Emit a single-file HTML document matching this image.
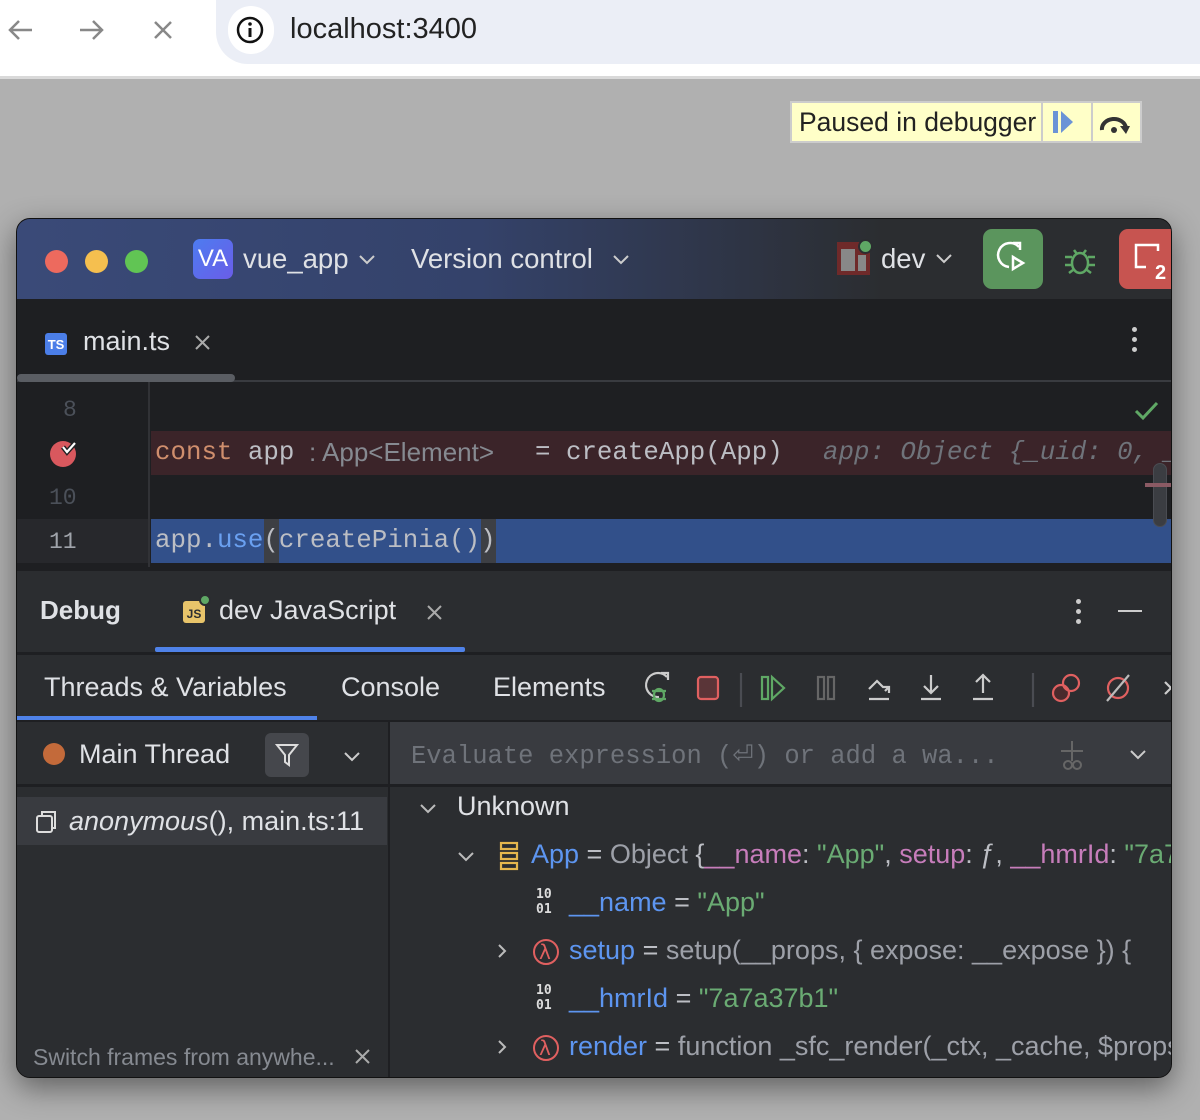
<!DOCTYPE html>
<html><head><meta charset="utf-8"><style>
*{margin:0;padding:0;box-sizing:border-box}
body{width:1200px;height:1120px;background:#b0b0b0;font-family:"Liberation Sans",sans-serif;position:relative;overflow:hidden}
.a{position:absolute}
.mono{font-family:"Liberation Mono",monospace}
.t{color:#dfe1e5;font-size:27px;white-space:nowrap}
</style></head><body>
<div class="a" style="left:0;top:0;width:1200px;height:76px;background:#fff"></div>
<div class="a" style="left:0;top:76px;width:1200px;height:3px;background:#d9d9d9"></div>
<div class="a" style="left:216px;top:0;width:1000px;height:64px;background:#ebeef6;border-radius:0 0 0 32px"></div>
<div class="a" style="left:228px;top:6px;width:46px;height:48px;background:#fff;border-radius:24px"></div>
<svg class="a" style="left:0;top:10px" width="200" height="40"><g stroke="#888" stroke-width="2.5" fill="none"><path d="M32 20H10M19 11l-9 9 9 9"/><path d="M80 20h22M93 11l9 9-9 9"/><path d="M155 12l16 16M171 12l-16 16"/></g></svg>
<svg class="a" style="left:236px;top:16px" width="28" height="28"><circle cx="14" cy="14" r="12" fill="none" stroke="#111" stroke-width="2.5"/><rect x="12.5" y="12" width="3" height="9" fill="#111"/><circle cx="14" cy="8" r="1.8" fill="#111"/></svg>
<div class="a" style="left:290px;top:13px;font-size:29px;color:#222">localhost:3400</div>
<div class="a" style="left:790px;top:101px;width:352px;height:42px;background:#ffffc8;border:2px solid #ccc"></div>
<div class="a" style="left:1041px;top:101px;width:2px;height:42px;background:#ccc"></div>
<div class="a" style="left:1091px;top:101px;width:2px;height:42px;background:#ccc"></div>
<div class="a" style="left:799px;top:107px;font-size:26.5px;color:#222">Paused in debugger</div>
<svg class="a" style="left:1050px;top:108px" width="90" height="30"><rect x="3" y="3" width="5" height="22" fill="#6b93d6"/><path d="M11 3l12 11-12 11z" fill="#6b93d6"/><path d="M52 22a12 10 0 0 1 24-2" fill="none" stroke="#333" stroke-width="4"/><path d="M70 18h10l-4 8z" fill="#333"/><circle cx="64" cy="22" r="3" fill="#333"/></svg>

<div class="a" style="left:16px;top:218px;width:1156px;height:860px;border-radius:14px;background:#2b2d30;border:1px solid #111;overflow:hidden;box-shadow:0 10px 30px rgba(0,0,0,.45)">
<div class="a" style="left:0;top:0;width:1156px;height:80px;background:linear-gradient(90deg,#3a4a78,#34426a 40%,#2b2d30 75%)"></div>
<div class="a" style="left:28px;top:31px;width:23px;height:23px;border-radius:50%;background:#ed6a5e"></div>
<div class="a" style="left:68px;top:31px;width:23px;height:23px;border-radius:50%;background:#f5bf4f"></div>
<div class="a" style="left:108px;top:31px;width:23px;height:23px;border-radius:50%;background:#61c554"></div>
<div class="a" style="left:176px;top:20px;width:40px;height:40px;border-radius:7px;background:linear-gradient(135deg,#4d7cf0,#6a5de8);color:#fff;font-size:24px;text-align:center;line-height:40px">VA</div>
<div class="a t" style="left:226px;top:24px;font-size:27.5px">vue_app</div>
<div class="a t" style="left:394px;top:24px;font-size:27.5px">Version control</div>
<svg class="a" style="left:340px;top:30px" width="280" height="20"><g stroke="#ccc" stroke-width="2" fill="none"><path d="M3 7l7 7 7-7"/><path d="M257 7l7 7 7-7"/></g></svg>
<div class="a" style="left:820px;top:23px;width:33px;height:33px;background:#6f2a2a"></div>
<div class="a" style="left:824px;top:30px;width:14px;height:22px;background:#888"></div>
<div class="a" style="left:841px;top:36px;width:8px;height:16px;background:#888"></div>
<div class="a" style="left:841px;top:20px;width:15px;height:15px;border-radius:50%;background:#5fa865;border:2px solid #2b2d30"></div>
<div class="a t" style="left:864px;top:24px;font-size:27.5px">dev</div>
<svg class="a" style="left:918px;top:32px" width="20" height="16"><path d="M2 4l7 7 7-7" stroke="#ccc" stroke-width="2" fill="none"/></svg>
<div class="a" style="left:966px;top:10px;width:60px;height:60px;border-radius:9px;background:#5b955d"></div>
<svg class="a" style="left:976px;top:20px" width="40" height="40"><g stroke="#fff" stroke-width="2.5" fill="none"><path d="M26 8a12 12 0 1 0-10 20"/><path d="M20 4h7v7"/><path d="M20 18l10 6-10 6z"/></g></svg>
<svg class="a" style="left:1044px;top:22px" width="38" height="38"><g stroke="#5fa865" stroke-width="2.5" fill="none"><ellipse cx="19" cy="22" rx="8" ry="10"/><path d="M13 9l3 4M25 9l-3 4M4 16h7M27 16h7M4 24h7M27 24h7M8 32l4-3M30 32l-4-3"/></g></svg>
<div class="a" style="left:1102px;top:10px;width:60px;height:60px;border-radius:9px;background:#c75450"></div>
<svg class="a" style="left:1112px;top:20px" width="44" height="44"><path d="M24 6H7v22h10" stroke="#fff" stroke-width="2.5" fill="none"/><path d="M24 6h5v6" stroke="#fff" stroke-width="2.5" fill="none"/><text x="26" y="40" fill="#fff" font-size="20" font-family="Liberation Sans" font-weight="bold">2</text></svg>

<div class="a" style="left:0;top:80px;width:1156px;height:272px;background:#1e1f22"></div>
<div class="a" style="left:28px;top:114px;width:22px;height:22px;background:#4b7ee8;border-radius:3px;color:#fff;font-size:13px;text-align:center;line-height:24px;font-weight:bold">TS</div>
<div class="a t" style="left:66px;top:107px;font-size:27px">main.ts</div>
<svg class="a" style="left:176px;top:114px" width="20" height="20"><path d="M3 3l13 13M16 3L3 16" stroke="#aaa" stroke-width="2"/></svg>
<div class="a" style="left:1115px;top:108px;width:5px;height:5px;border-radius:50%;background:#ccc;box-shadow:0 10px 0 #ccc,0 20px 0 #ccc"></div>
<div class="a" style="left:0;top:161px;width:1156px;height:2px;background:#393b40"></div>
<div class="a" style="left:0;top:155px;width:218px;height:8px;background:#5a5d63;border-radius:4px"></div>
<div class="a" style="left:131px;top:163px;width:2px;height:185px;background:#313236"></div>
<div class="a" style="left:134px;top:212px;width:1022px;height:44px;background:#3b2429"></div>
<div class="a" style="left:0;top:300px;width:131px;height:44px;background:#27282c"></div>
<div class="a" style="left:134px;top:300px;width:1022px;height:44px;background:#32508a"></div>
<div class="a" style="left:247px;top:300px;width:15px;height:44px;background:#3d3f44"></div>
<div class="a" style="left:464px;top:300px;width:15px;height:44px;background:#3d3f44"></div>
<div class="a mono" style="left:46px;top:178px;font-size:23px;color:#4b5059">8</div>
<div class="a mono" style="left:32px;top:266px;font-size:23px;color:#4b5059">10</div>
<div class="a mono" style="left:32px;top:310px;font-size:23px;color:#a0a4ab">11</div>
<svg class="a" style="left:28px;top:214px" width="36" height="36"><circle cx="18" cy="21" r="13" fill="#d9585e"/><path d="M18 14l4 5 8-9" stroke="#1e1f22" stroke-width="5" fill="none"/><path d="M18 14l4 5 8-9" stroke="#fff" stroke-width="2.2" fill="none"/></svg>
<div class="a mono" style="left:138px;top:219px;font-size:25.8px;color:#cf8e6d;white-space:pre">const <span style="color:#bcbec4">app</span></div>
<div class="a" style="left:292px;top:218px;font-size:26px;color:#868a91;white-space:pre">: App&lt;Element&gt;</div>
<div class="a mono" style="left:518px;top:219px;font-size:25.8px;color:#bcbec4;white-space:pre">= createApp(App)</div>
<div class="a mono" style="left:806px;top:219px;font-size:25.8px;color:#6f737a;font-style:italic;white-space:pre">app: Object {_uid: 0, _</div>
<div class="a mono" style="left:138px;top:307px;font-size:25.8px;color:#bcbec4;white-space:pre">app.<span style="color:#6aa0f0">use</span>(createPinia())</div>
<svg class="a" style="left:1116px;top:180px" width="28" height="24"><path d="M3 12l7 7 14-15" stroke="#5fa865" stroke-width="3" fill="none"/></svg>
<div class="a" style="left:1136px;top:244px;width:14px;height:64px;background:#3b3d42;border-radius:7px;border:1px solid #4a4c52"></div>
<div class="a" style="left:1128px;top:264px;width:28px;height:4px;background:#8b5a64"></div>

<div class="a" style="left:0;top:352px;width:1156px;height:508px;background:#2b2d30"></div>
<div class="a t" style="left:23px;top:376px;font-weight:bold;font-size:26px">Debug</div>
<div class="a" style="left:166px;top:382px;width:22px;height:22px;background:#e8c46a;border-radius:3px;color:#2b2d30;font-size:12px;font-weight:bold;text-align:center;line-height:26px">JS</div>
<div class="a" style="left:182px;top:375px;width:12px;height:12px;border-radius:50%;background:#5fa865;border:2px solid #2b2d30"></div>
<div class="a t" style="left:202px;top:376px;font-size:27px">dev JavaScript</div>
<svg class="a" style="left:408px;top:384px" width="20" height="20"><path d="M3 3l13 13M16 3L3 16" stroke="#aaa" stroke-width="2"/></svg>
<div class="a" style="left:138px;top:428px;width:310px;height:5px;background:#4f82e8;border-radius:2px"></div>
<div class="a" style="left:1059px;top:380px;width:5px;height:5px;border-radius:50%;background:#ccc;box-shadow:0 10px 0 #ccc,0 20px 0 #ccc"></div>
<div class="a" style="left:1101px;top:391px;width:24px;height:2px;background:#ccc"></div>
<div class="a" style="left:0;top:433px;width:1156px;height:3px;background:#1e1f22"></div>
<div class="a t" style="left:27px;top:453px">Threads &amp; Variables</div>
<div class="a t" style="left:324px;top:453px">Console</div>
<div class="a t" style="left:476px;top:453px">Elements</div>
<div class="a" style="left:0;top:497px;width:300px;height:4px;background:#4f82e8"></div>
<svg class="a" style="left:620px;top:448px" width="536" height="44"><g fill="none" stroke-width="2.2">
<path d="M30 10a12 12 0 1 0-8 20" stroke="#ccc"/><path d="M24 6h7v7" stroke="#ccc"/><ellipse cx="22" cy="28" rx="5" ry="6" stroke="#5fa865"/><path d="M15 24h14M15 32h14" stroke="#5fa865"/>
<rect x="61" y="10" width="20" height="22" rx="3" fill="#5a3538" stroke="#e06060"/>
<path d="M104 6v34" stroke="#4a4c52"/>
<rect x="125" y="10" width="6" height="22" stroke="#5fa865"/><path d="M135 10l12 11-12 11z" stroke="#5fa865"/>
<rect x="181" y="10" width="6" height="22" stroke="#666"/><rect x="191" y="10" width="6" height="22" stroke="#666"/>
<path d="M232 32h20M232 22l8-8 6 6h6v6M252 20l-4 4" stroke="#ccc"/>
<path d="M284 32h20M294 8v18M287 19l7 7 7-7" stroke="#ccc"/>
<path d="M336 32h20M346 26V8M339 15l7-7 7 7" stroke="#ccc"/>
<path d="M396 6v34" stroke="#4a4c52"/>
<circle cx="424" cy="26" r="8" fill="#4a2a2c" stroke="#e06060"/><circle cx="434" cy="16" r="8" stroke="#e06060"/>
<circle cx="481" cy="21" r="10" stroke="#e06060"/><path d="M470 34l22-26" stroke="#bbb"/>
<path d="M528 15l6 6-6 6" stroke="#ccc"/></g></svg>
<div class="a" style="left:0;top:501px;width:1156px;height:2px;background:#1e1f22"></div>
<div class="a" style="left:371px;top:503px;width:2px;height:357px;background:#1e1f22"></div>
<div class="a" style="left:373px;top:503px;width:783px;height:64px;background:#393b40"></div>
<div class="a" style="left:26px;top:524px;width:22px;height:22px;border-radius:50%;background:#c36a3a"></div>
<div class="a t" style="left:62px;top:520px">Main Thread</div>
<div class="a" style="left:248px;top:514px;width:44px;height:44px;border-radius:6px;background:#45474c"></div>
<svg class="a" style="left:256px;top:522px" width="28" height="28"><path d="M4 4h20l-8 10v10l-4-3v-7z" stroke="#ddd" stroke-width="2" fill="none"/></svg>
<svg class="a" style="left:326px;top:530px" width="20" height="16"><path d="M2 4l7 7 7-7" stroke="#ccc" stroke-width="2" fill="none"/></svg>
<div class="a" style="left:0;top:565px;width:1156px;height:3px;background:#1e1f22"></div>
<div class="a mono" style="left:394px;top:521px;font-size:25.5px;color:#6f737a;white-space:pre">Evaluate expression (⏎) or add a wa...</div>
<svg class="a" style="left:1040px;top:518px" width="120" height="40"><g stroke="#666" stroke-width="2" fill="none"><path d="M15 4v20M4 14h22"/><circle cx="11" cy="28" r="4"/><circle cx="20" cy="28" r="4"/></g><path d="M74 14l7 7 7-7" stroke="#ccc" stroke-width="2" fill="none"/></svg>
<div class="a" style="left:0;top:578px;width:370px;height:48px;background:#393b40"></div>
<svg class="a" style="left:18px;top:590px" width="24" height="26"><rect x="2" y="7" width="15" height="16" rx="2" stroke="#ddd" stroke-width="2" fill="none"/><path d="M7 7V3h13v16h-3" stroke="#ddd" stroke-width="2" fill="none"/></svg>
<div class="a t" style="left:52px;top:587px"><i>anonymous</i>(), main.ts:11</div>
<div class="a" style="left:16px;top:825px;font-size:23px;color:#868a91;white-space:nowrap">Switch frames from anywhe...</div>
<svg class="a" style="left:336px;top:828px" width="20" height="20"><path d="M3 3l13 13M16 3L3 16" stroke="#aaa" stroke-width="2"/></svg>
<svg class="a" style="left:400px;top:578px" width="160" height="300"><g stroke="#bbb" stroke-width="2" fill="none"><path d="M4 8l7 7 7-7"/><path d="M42 56l7 7 7-7"/><path d="M82 148l6 6-6 6"/><path d="M82 244l6 6-6 6"/></g>
<g stroke="#e5b74d" stroke-width="2.2" fill="none"><rect x="84" y="46" width="16" height="6"/><rect x="84" y="56" width="16" height="6"/><rect x="84" y="66" width="16" height="6"/></g>
<g stroke="#e06060" stroke-width="2" fill="none"><circle cx="129" cy="155" r="12"/><circle cx="129" cy="251" r="12"/></g>
<g fill="#e06060" font-size="20" font-family="DejaVu Sans"><text x="122" y="162">λ</text><text x="122" y="258">λ</text></g>
<g fill="#ddd" font-size="13" font-weight="bold" font-family="DejaVu Sans Mono"><text x="119" y="101">10</text><text x="119" y="116">01</text><text x="119" y="197">10</text><text x="119" y="212">01</text></g></svg>
<div class="a t" style="left:440px;top:572px">Unknown</div>
<div class="a" style="left:514px;top:620px;font-size:27px;color:#bcbec4;white-space:nowrap"><span style="color:#5d95f0">App</span> = <span style="color:#9da0a8">Object</span> {<span style="color:#c77dbb">__name</span>: <span style="color:#6aab73">"App"</span>, <span style="color:#c77dbb">setup</span>: ƒ, <span style="color:#c77dbb">__hmrId</span>: <span style="color:#6aab73">"7a7a</span></div>
<div class="a" style="left:552px;top:668px;font-size:27px;color:#bcbec4;white-space:nowrap"><span style="color:#5d95f0">__name</span> = <span style="color:#6aab73">"App"</span></div>
<div class="a" style="left:552px;top:716px;font-size:27px;color:#bcbec4;white-space:nowrap"><span style="color:#5d95f0">setup</span> = <span style="color:#9da0a8">setup(__props, { expose: __expose }) {</span></div>
<div class="a" style="left:552px;top:764px;font-size:27px;color:#bcbec4;white-space:nowrap"><span style="color:#5d95f0">__hmrId</span> = <span style="color:#6aab73">"7a7a37b1"</span></div>
<div class="a" style="left:552px;top:812px;font-size:27px;color:#bcbec4;white-space:nowrap"><span style="color:#5d95f0">render</span> = <span style="color:#9da0a8">function _sfc_render(_ctx, _cache, $props</span></div>
</div>
</body></html>
